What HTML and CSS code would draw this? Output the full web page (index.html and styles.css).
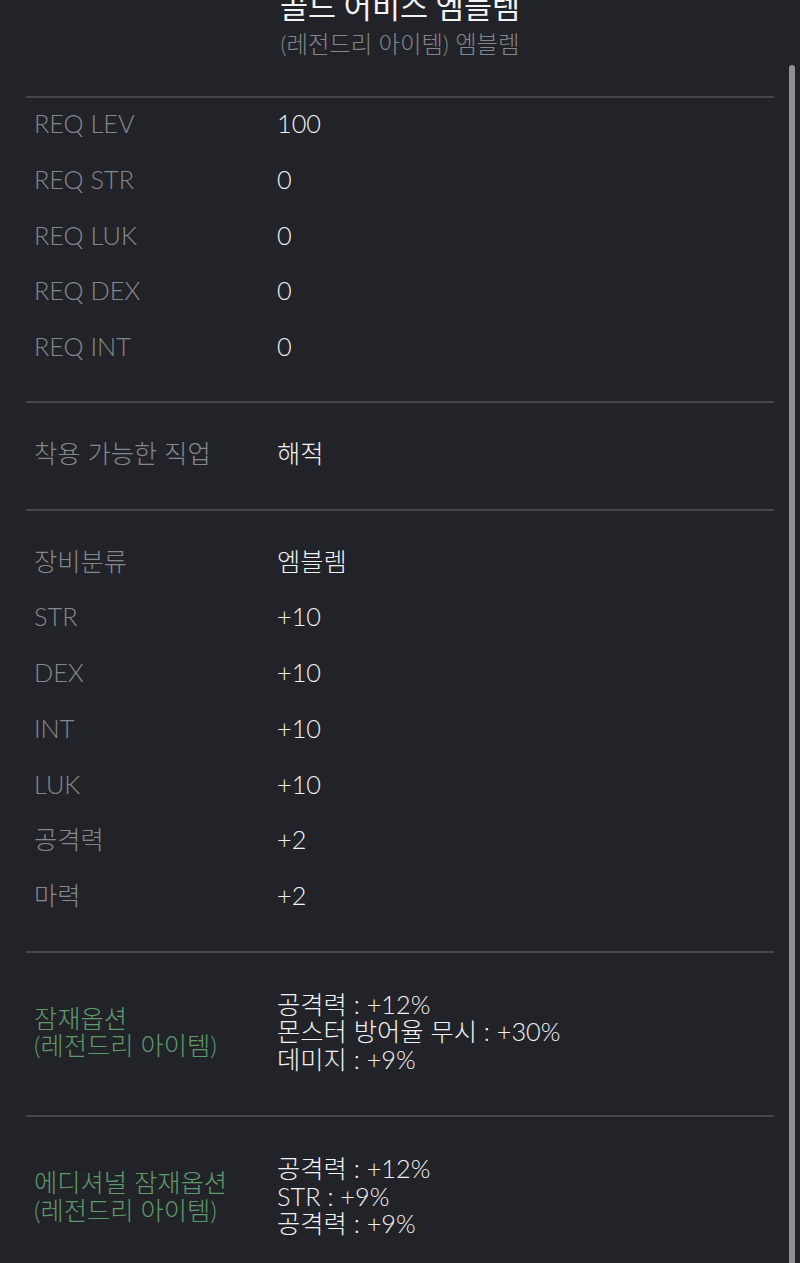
FILE: index.html
```html
<!DOCTYPE html>
<html lang="ko">
<head>
<meta charset="utf-8">
<link rel="stylesheet" href="styles.css">
</head>
<body>
<div class="page">
  <header class="head">
    <div class="title">골드 어비스 엠블렘</div>
    <div class="subtitle">(레전드리 아이템) 엠블렘</div>
  </header>

  <section class="sec sec-first">
    <div class="row"><div class="lab">REQ LEV</div><div class="val">100</div></div>
    <div class="row"><div class="lab">REQ STR</div><div class="val">0</div></div>
    <div class="row"><div class="lab">REQ LUK</div><div class="val">0</div></div>
    <div class="row"><div class="lab">REQ DEX</div><div class="val">0</div></div>
    <div class="row"><div class="lab">REQ INT</div><div class="val">0</div></div>
  </section>

  <section class="sec">
    <div class="row"><div class="lab">착용 가능한 직업</div><div class="val">해적</div></div>
  </section>

  <section class="sec">
    <div class="row"><div class="lab">장비분류</div><div class="val">엠블렘</div></div>
    <div class="row"><div class="lab">STR</div><div class="val">+10</div></div>
    <div class="row"><div class="lab">DEX</div><div class="val">+10</div></div>
    <div class="row"><div class="lab">INT</div><div class="val">+10</div></div>
    <div class="row"><div class="lab">LUK</div><div class="val">+10</div></div>
    <div class="row"><div class="lab">공격력</div><div class="val">+2</div></div>
    <div class="row"><div class="lab">마력</div><div class="val">+2</div></div>
  </section>

  <section class="sec">
    <div class="row multi"><div class="lab green">잠재옵션<br>(레전드리 아이템)</div><div class="val">공격력 : +12%<br>몬스터 방어율 무시 : +30%<br>데미지 : +9%</div></div>
  </section>

  <section class="sec">
    <div class="row multi"><div class="lab green">에디셔널 잠재옵션<br>(레전드리 아이템)</div><div class="val">공격력 : +12%<br>STR : +9%<br>공격력 : +9%</div></div>
  </section>
</div>
<div class="scrollbar"></div>
</body>
</html>
```
FILE: styles.css
```css
html, body {
  margin: 0;
  padding: 0;
  background: #222328;
  overflow: hidden;
}
body {
  font-family: Lato, "Noto Sans CJK KR", "Noto Sans", sans-serif;
  color: #f2f2f2;
}
.page {
  padding: 0 26px;
}
.head {
  text-align: center;
  margin-top: -14px;
  height: 110px;
  box-sizing: border-box;
}
.title {
  font-size: 30.5px;
  line-height: 40px;
  color: #f4f4f4;
  font-weight: 400;
}
.subtitle {
  margin-top: 3px;
  font-size: 23.3px;
  line-height: 30px;
  color: #85868b;
  font-weight: 300;
}
.sec {
  border-top: 2px solid #45464c;
  padding: 23px 0 27px;
}
.sec-first {
  padding-top: 0;
  padding-bottom: 26px;
}
.sec-first .row:first-child {
  margin-top: -2px;
}
.row {
  display: flex;
  align-items: center;
  min-height: 55.75px;
  font-size: 25.3px;
  font-weight: 300;
}
.row.multi {
  padding: 15px 0;
}
.lab {
  width: 243px;
  padding-left: 8px;
  color: #86878c;
  line-height: 27.5px;
}
.val {
  color: #f2f2f2;
  line-height: 27.5px;
}
.green {
  color: #5f9a6b;
}
.scrollbar {
  position: absolute;
  left: 789px;
  top: 65px;
  width: 6px;
  height: 1300px;
  border-radius: 3px;
  background: #8e8f94;
}
```
